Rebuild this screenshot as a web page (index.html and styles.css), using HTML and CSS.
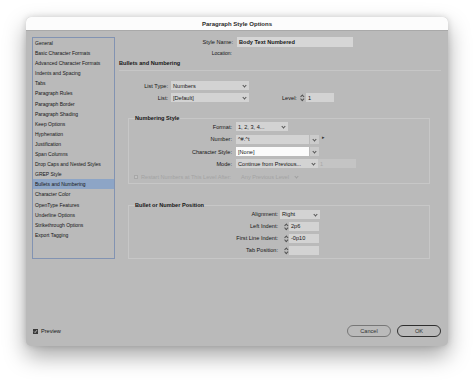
FILE: index.html
```html
<!DOCTYPE html>
<html lang="en">
<head>
    <meta charset="UTF-8">
    <title>Paragraph Style Options</title>
    <link rel="stylesheet" href="styles.css">
</head>
<body>
<div class="window">
    <div class="titlebar">Paragraph Style Options</div>
    <div class="body">
        <div class="content">
            <ul class="sidebar">
                <li>General</li>
                <li>Basic Character Formats</li>
                <li>Advanced Character Formats</li>
                <li>Indents and Spacing</li>
                <li>Tabs</li>
                <li>Paragraph Rules</li>
                <li>Paragraph Border</li>
                <li>Paragraph Shading</li>
                <li>Keep Options</li>
                <li>Hyphenation</li>
                <li>Justification</li>
                <li>Span Columns</li>
                <li>Drop Caps and Nested Styles</li>
                <li>GREP Style</li>
                <li class="selected">Bullets and Numbering</li>
                <li>Character Color</li>
                <li>OpenType Features</li>
                <li>Underline Options</li>
                <li>Strikethrough Options</li>
                <li>Export Tagging</li>
            </ul>
            <div class="main">
                <div class="row name-row">
                    <span class="label label-top">Style Name:</span>
                    <span class="field name-field">Body Text Numbered</span>
                </div>
                <div class="row loc-row">
                    <span class="label label-top loc">Location:</span>
                </div>
                <div class="section-title">Bullets and Numbering</div>
                <div class="separator"></div>

                <div class="row list-row first">
                    <span class="label label-list">List Type:</span>
                    <span class="field select w78">Numbers<i class="chev"></i></span>
                </div>
                <div class="row list-row">
                    <span class="label label-list">List:</span>
                    <span class="field select w78">[Default]<i class="chev"></i></span>
                    <span class="label level">Level:</span>
                    <span class="spin"></span>
                    <span class="field w28">1</span>
                </div>

                <fieldset class="group numbering">
                    <legend>Numbering Style</legend>
                    <div class="row grp-row">
                        <span class="label label-num">Format:</span>
                        <span class="field select w52">1, 2, 3, 4...<i class="chev"></i></span>
                    </div>
                    <div class="row grp-row tall">
                        <span class="label label-num">Number:</span>
                        <span class="field w73">^#.^t</span>
                        <span class="field drop"><i class="chev"></i></span>
                        <span class="tri">&#9656;</span>
                    </div>
                    <div class="row grp-row">
                        <span class="label label-num">Character Style:</span>
                        <span class="field white w73">[None]</span>
                        <span class="field drop"><i class="chev"></i></span>
                    </div>
                    <div class="row grp-row">
                        <span class="label label-num">Mode:</span>
                        <span class="field select w82">Continue from Previous...<i class="chev"></i></span>
                        <span class="field disabled w38">1</span>
                    </div>
                    <div class="row restart-row">
                        <span class="check off"></span>
                        <span class="dim">Restart Numbers at This Level After:</span>
                        <span class="dim any">Any Previous Level<i class="chev dimchev"></i></span>
                    </div>
                </fieldset>

                <fieldset class="group position">
                    <legend>Bullet or Number Position</legend>
                    <div class="row pos-row">
                        <span class="label label-pos">Alignment:</span>
                        <span class="field select w40">Right<i class="chev"></i></span>
                    </div>
                    <div class="row pos-row">
                        <span class="label label-pos">Left Indent:</span>
                        <span class="spin"></span>
                        <span class="field w30">2p6</span>
                    </div>
                    <div class="row pos-row">
                        <span class="label label-pos">First Line Indent:</span>
                        <span class="spin"></span>
                        <span class="field w30">-0p10</span>
                    </div>
                    <div class="row pos-row">
                        <span class="label label-pos">Tab Position:</span>
                        <span class="spin"></span>
                        <span class="field w30"></span>
                    </div>
                </fieldset>
            </div>
        </div>
        <div class="footer">
            <label class="preview">
                <svg class="checkbox" width="5" height="5" viewBox="0 0 5 5">
                    <rect x="0" y="0" width="5" height="5" fill="#3a3a3a"/>
                    <polyline points="1.1,2.6 2.1,3.6 3.9,1.2" fill="none" stroke="#d8d8d8" stroke-width="0.8"/>
                </svg>
                Preview
            </label>
            <div class="buttons">
                <span class="btn">Cancel</span>
                <span class="btn primary">OK</span>
            </div>
        </div>
    </div>
</div>
</body>
</html>
```

FILE: styles.css
```css
html, body {
    margin: 0;
    height: 100%;
    background: #ffffff;
}

body {
    padding: 17px 0 0 26px;
    box-sizing: border-box;
    font-family: "Liberation Sans", Arial, sans-serif;
    color: #161616;
}

.window {
    width: 422px;
    height: 329px;
    border-radius: 5px;
    overflow: hidden;
    background: #bababa;
    box-shadow: 0 10px 22px rgba(0, 0, 0, 0.35), 0 0 6px rgba(0, 0, 0, 0.15);
    display: flex;
    flex-direction: column;
}

.titlebar {
    height: 14px;
    line-height: 14px;
    background: #fcfcfc;
    border-bottom: 1px solid #a9a9a9;
    text-align: center;
    font-size: 6px;
    font-weight: bold;
    color: #2a2a2a;
    box-sizing: border-box;
}

.body {
    flex: 1;
    display: flex;
    flex-direction: column;
    padding: 6px 7px 9px 6px;
}

.content {
    display: flex;
    gap: 0 4px;
}

/* left list */
.sidebar {
    list-style: none;
    margin: 0;
    padding: 0;
    width: 83px;
    height: 222px;
    box-sizing: border-box;
    border: 1px solid #8293b2;
    font-size: 5px;

    li {
        height: 10.1px;
        line-height: 10.1px;
        padding-left: 2px;
        white-space: nowrap;
    }

    .selected {
        background: #8da5c6;
    }
}

.main {
    flex: 1;
    font-size: 5.6px;
}

.row {
    display: flex;
    align-items: center;
    white-space: nowrap;
}

.label {
    text-align: right;
    flex-shrink: 0;
}

.field {
    display: inline-flex;
    align-items: center;
    height: 9px;
    background: #d3d3d3;
    padding: 0 2px;
    box-sizing: border-box;
    flex-shrink: 0;
    position: relative;
}

.white {
    background: #fbfbfb;
}

.disabled {
    background: #c4c4c4;
    color: #a8a8a8;
}

.chev {
    position: absolute;
    right: 3px;
    top: 3px;
    width: 2px;
    height: 2px;
    border-right: 0.8px solid #555;
    border-bottom: 0.8px solid #555;
    transform: rotate(45deg);
}

.dimchev {
    position: relative;
    display: inline-block;
    right: auto;
    top: -1px;
    margin-left: 6px;
    border-color: #a0a0a0;
}

.drop {
    width: 9px;
    margin-left: 1px;
    background: #cbcbcb;

    .chev {
        right: 3px;
    }
}

.spin {
    width: 5px;
    height: 8px;
    margin-right: 1px;
    flex-shrink: 0;
    position: relative;

    &::before, &::after {
        content: "";
        position: absolute;
        left: 1.5px;
        width: 1.6px;
        height: 1.6px;
        border-left: 0.7px solid #555;
        border-top: 0.7px solid #555;
    }

    &::before {
        top: 1.5px;
        transform: rotate(45deg);
    }

    &::after {
        top: 4.5px;
        transform: rotate(225deg);
    }
}

.w78 { width: 78px; }
.w52 { width: 52px; }
.w73 { width: 73px; }
.w82 { width: 82px; }
.w38 { width: 38px; }
.w40 { width: 40px; }
.w30 { width: 30px; }
.w28 { width: 28px; }

/* top rows */
.label-top {
    width: 114px;
    margin-right: 4px;
}

.name-row {
    height: 10px;
}

.name-field {
    width: 116px;
    height: 10px;
    background: #d6d6d6;
    font-weight: bold;
}

.loc-row {
    height: 11px;
}

.loc {
    width: 113px;
    font-size: 5px;
}

.section-title {
    font-weight: bold;
    height: 11px;
    line-height: 11px;
}

.separator {
    height: 1px;
    background: #c6c6c6;
    margin-top: 1px;
}

.list-row {
    height: 9px;
    margin-top: 3px;

    &.first {
        margin-top: 10px;
    }
}

.label-list {
    width: 49px;
    margin-right: 3px;
}

.level {
    margin-left: 33px;
    margin-right: 3px;
}

/* group boxes */
.group {
    margin: 0 0 0 9px;
    width: 302px;
    box-sizing: border-box;
    border: 1px solid #c7c7c7;
    padding: 0;

    legend {
        font-weight: bold;
        padding: 0;
        margin-left: 6px;
        line-height: 8px;
    }
}

.numbering {
    margin-top: 12px;
    height: 70px;
}

.position {
    margin-top: 17px;
    height: 58px;
}

.grp-row {
    height: 9px;
    margin-top: 3px;

    &:first-of-type {
        margin-top: 0;
    }

    &.tall {
        height: 10px;
    }
}

.label-num {
    width: 103px;
    margin-right: 4px;
}

.tri {
    font-size: 5px;
    margin-left: 3px;
    margin-top: -4px;
    color: #333;
}

.restart-row {
    height: 9px;
    margin-top: 4px;
    padding-left: 5px;
}

.dim {
    color: #a3a3a3;
}

.any {
    margin-left: 10px;
}

.check {
    width: 4px;
    height: 4px;
    flex-shrink: 0;
    margin-right: 3px;
    box-sizing: border-box;

    &.off {
        border: 0.8px solid #a8a8a8;
        background: #c2c2c2;
    }
}

.pos-row {
    height: 8px;
    margin-top: 4px;

    &:first-of-type {
        margin-top: 1px;
    }
}

.label-pos {
    width: 149px;
    margin-right: 2px;
}

.pos-row .spin {
    margin-left: 3px;
}

/* footer */
.footer {
    margin-top: auto;
    display: flex;
    align-items: center;
    justify-content: space-between;
    font-size: 5.6px;
}

.preview {
    display: flex;
    align-items: center;
    gap: 0 3px;
    margin-left: 1px;
}

.buttons {
    display: flex;
    gap: 0 6px;
}

.btn {
    width: 44px;
    height: 12px;
    line-height: 10px;
    text-align: center;
    border: 1px solid #777;
    border-radius: 6px;
    box-sizing: border-box;
    color: #333;
}

.btn.primary {
    border: 1.5px solid #2f2f2f;
}
```
